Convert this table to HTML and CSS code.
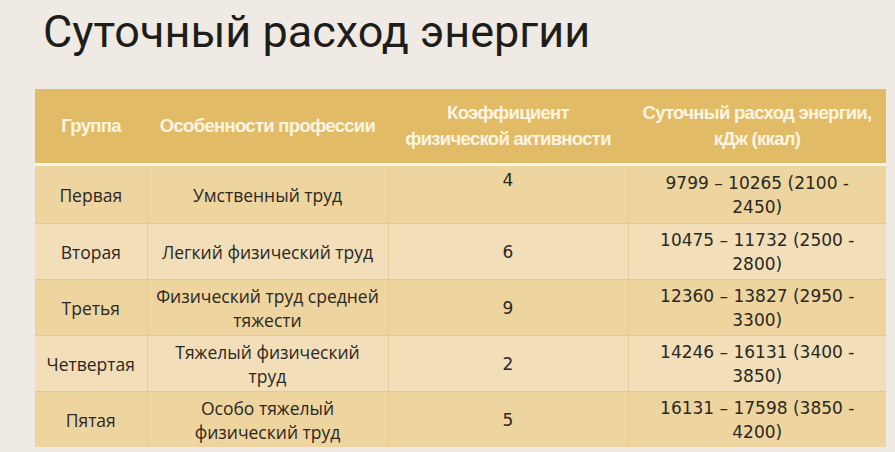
FILE: index.html
```html
<!DOCTYPE html>
<html lang="ru">
<head>
<meta charset="utf-8">
<link rel="stylesheet" href="styles.css">
</head>
<body>
<div class="slide">
  <h1 class="title">Суточный расход энергии</h1>
  <table class="energy">
    <colgroup>
      <col class="c1"><col class="c2"><col class="c3"><col class="c4">
    </colgroup>
    <thead>
      <tr>
        <th>Группа</th>
        <th>Особенности профессии</th>
        <th>Коэффициент<br>физической активности</th>
        <th>Суточный расход энергии,<br>кДж (ккал)</th>
      </tr>
    </thead>
    <tbody>
      <tr class="odd">
        <td>Первая</td>
        <td>Умственный труд</td>
        <td class="num top">4</td>
        <td class="num">9799 – 10265 (2100 -<br>2450)</td>
      </tr>
      <tr class="even">
        <td>Вторая</td>
        <td>Легкий физический труд</td>
        <td class="num">6</td>
        <td class="num">10475 – 11732 (2500 -<br>2800)</td>
      </tr>
      <tr class="odd">
        <td>Третья</td>
        <td>Физический труд средней<br>тяжести</td>
        <td class="num">9</td>
        <td class="num">12360 – 13827 (2950 -<br>3300)</td>
      </tr>
      <tr class="even">
        <td>Четвертая</td>
        <td>Тяжелый физический<br>труд</td>
        <td class="num">2</td>
        <td class="num">14246 – 16131 (3400 -<br>3850)</td>
      </tr>
      <tr class="odd">
        <td>Пятая</td>
        <td>Особо тяжелый<br>физический труд</td>
        <td class="num">5</td>
        <td class="num">16131 – 17598 (3850 -<br>4200)</td>
      </tr>
    </tbody>
  </table>
</div>
</body>
</html>
```
FILE: styles.css
```css
html, body {
  margin: 0;
  padding: 0;
  background: #efebe4;
}
.slide {
  width: 895px;
  height: 452px;
  padding: 0 0 0 35px;
  box-sizing: border-box;
  overflow: hidden;
}
.title {
  margin: 0;
  padding: 6px 0 0 8px;
  height: 83px;
  box-sizing: border-box;
  font-family: Roboto, "Liberation Sans", sans-serif;
  font-weight: 400;
  font-size: 45px;
  line-height: 52px;
  color: #1e1d1a;
}
.energy {
  width: 851px;
  border-collapse: collapse;
  table-layout: fixed;
  margin-top: 6px;
}
.c1 { width: 112px; }
.c2 { width: 241px; }
.c3 { width: 240px; }
.c4 { width: 258px; }
.energy th {
  background: #e2bb66;
  color: #fdf5e2;
  font-family: "Liberation Sans", Arial, sans-serif;
  font-weight: 700;
  font-size: 18.5px;
  letter-spacing: -0.7px;
  line-height: 26px;
  height: 74px;
  padding: 0 2px;
  text-align: center;
  vertical-align: middle;
  border-bottom: 3px solid #fdf7e8;
}
.energy td {
  font-family: "Open Sans", "Liberation Sans", sans-serif;
  font-size: 17.5px;
  line-height: 24px;
  color: #2a2823;
  text-align: center;
  vertical-align: middle;
  height: 55px;
  padding: 0 4px;
  border-left: 1px solid #e6c98a;
  border-top: 1px solid #e6c98a;
}
.energy td.num {
  font-family: "DejaVu Sans", "Open Sans", sans-serif;
  font-size: 17px;
}
.energy td:first-child { border-left: none; }
.energy td.top { vertical-align: top; padding-top: 2px; }
.odd td { background: #eed49e; }
.even td { background: #f2dfb9; }
```
